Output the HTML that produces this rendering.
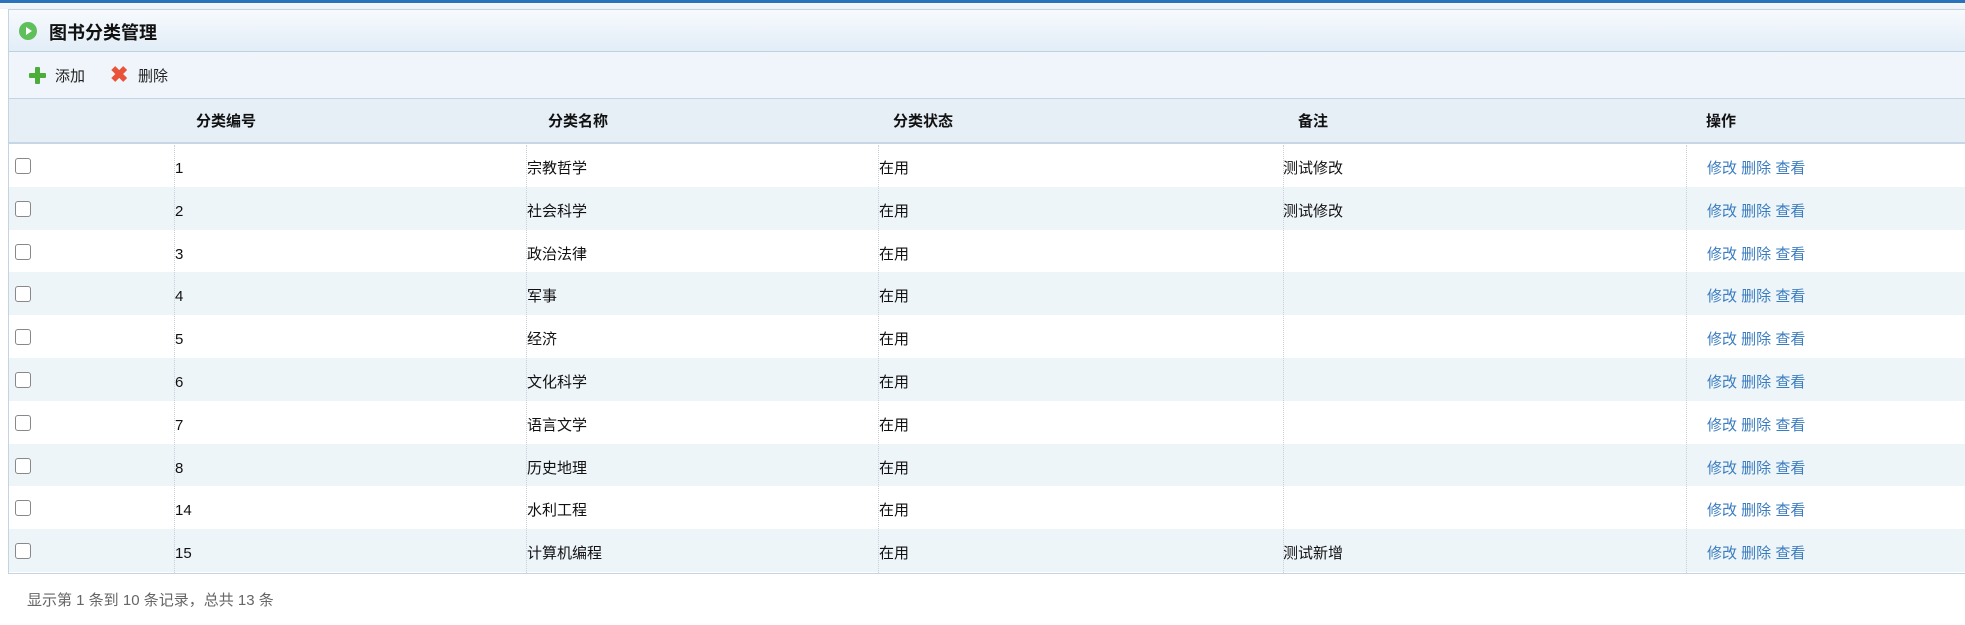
<!DOCTYPE html>
<html><head><meta charset="utf-8"><style>
*{margin:0;padding:0;box-sizing:border-box}
body{width:1965px;height:625px;background:#fff;font-family:"Liberation Sans","Noto Sans CJK SC",sans-serif;position:relative;overflow:hidden}
.top{position:absolute;left:0;top:0;width:1965px;height:3px;background:#2a72ba}
.strip{position:absolute;left:0;top:3px;width:1965px;height:6px;background:linear-gradient(#f6f8fa,#eef2f6)}
.panel{position:absolute;left:8px;top:9px;width:1957px;height:565px;border-left:1px solid #c4d4e2;border-top:1px solid #c4d4e2;border-bottom:1px solid #c4d4e2}
.title{height:42px;background:linear-gradient(#f7fafd,#e2edf7);border-bottom:1px solid #bcd0e2;position:relative}
.title .ic{position:absolute;left:10px;top:12px;width:18px;height:18px;border-radius:50%;background:#5fbf5a}
.title .ic:after{content:"";position:absolute;left:7px;top:5px;border-left:6px solid #fff;border-top:4px solid transparent;border-bottom:4px solid transparent}
.title span{position:absolute;left:40px;top:9px;font-size:18px;font-weight:bold;color:#111}
.tool{height:47px;background:#eff5fa;border-bottom:1px solid #c4d4e2;position:relative;font-size:15px;color:#222}
.tool .a{position:absolute;left:46px;top:13px}
.tool .d{position:absolute;left:129px;top:13px}
.plus{position:absolute;left:20px;top:15px;width:17px;height:17px}
.plus:before{content:"";position:absolute;left:6px;top:0;width:5px;height:17px;background:#4cad3a;border-radius:1px}
.plus:after{content:"";position:absolute;left:0;top:6px;width:17px;height:5px;background:#4cad3a;border-radius:1px}
.x{position:absolute;left:101px;top:12px;font-size:22px;color:#e8533a;font-weight:bold;line-height:22px}
.hdr{height:45px;background:#e6eef6;border-bottom:2px solid #c6d6e4;position:relative;font-size:15px;font-weight:bold;color:#111}
.hdr span{position:absolute;top:0;line-height:45px}
.row{height:42.8px;position:relative;font-size:15px;color:#111}
.row:nth-child(even){background:#eef5f9}
.row span{position:absolute;top:3px;line-height:43px}
.row .cb{position:absolute;left:6px;top:14px;width:16px;height:16px;border:1.5px solid #888;border-radius:3px;background:#fff}
.vl{position:absolute;top:145px;height:428px;border-left:1px dotted #c8d0d8}
.ops{color:#3a7cc0;left:1698px}
.foot{position:absolute;left:27px;top:589px;font-size:15px;color:#666}
</style></head><body>
<div class="top"></div><div class="strip"></div>
<div class="panel">
<div class="title"><div class="ic"></div><span>图书分类管理</span></div>
<div class="tool"><div class="plus"></div><span class="a">添加</span><span class="x">✖</span><span class="d">删除</span></div>
<div class="hdr"><span style="left:187px">分类编号</span><span style="left:539px">分类名称</span><span style="left:884px">分类状态</span><span style="left:1289px">备注</span><span style="left:1697px">操作</span></div>
<div>
<div class="row"><div class="cb"></div><span style="left:166px">1</span><span style="left:518px">宗教哲学</span><span style="left:870px">在用</span><span style="left:1274px">测试修改</span><span class="ops">修改 删除 查看</span></div>
<div class="row"><div class="cb"></div><span style="left:166px">2</span><span style="left:518px">社会科学</span><span style="left:870px">在用</span><span style="left:1274px">测试修改</span><span class="ops">修改 删除 查看</span></div>
<div class="row"><div class="cb"></div><span style="left:166px">3</span><span style="left:518px">政治法律</span><span style="left:870px">在用</span><span class="ops">修改 删除 查看</span></div>
<div class="row"><div class="cb"></div><span style="left:166px">4</span><span style="left:518px">军事</span><span style="left:870px">在用</span><span class="ops">修改 删除 查看</span></div>
<div class="row"><div class="cb"></div><span style="left:166px">5</span><span style="left:518px">经济</span><span style="left:870px">在用</span><span class="ops">修改 删除 查看</span></div>
<div class="row"><div class="cb"></div><span style="left:166px">6</span><span style="left:518px">文化科学</span><span style="left:870px">在用</span><span class="ops">修改 删除 查看</span></div>
<div class="row"><div class="cb"></div><span style="left:166px">7</span><span style="left:518px">语言文学</span><span style="left:870px">在用</span><span class="ops">修改 删除 查看</span></div>
<div class="row"><div class="cb"></div><span style="left:166px">8</span><span style="left:518px">历史地理</span><span style="left:870px">在用</span><span class="ops">修改 删除 查看</span></div>
<div class="row"><div class="cb"></div><span style="left:166px">14</span><span style="left:518px">水利工程</span><span style="left:870px">在用</span><span class="ops">修改 删除 查看</span></div>
<div class="row"><div class="cb"></div><span style="left:166px">15</span><span style="left:518px">计算机编程</span><span style="left:870px">在用</span><span style="left:1274px">测试新增</span><span class="ops">修改 删除 查看</span></div>
</div></div>
<div class="vl" style="left:174px"></div><div class="vl" style="left:526px"></div><div class="vl" style="left:878px"></div><div class="vl" style="left:1283px"></div><div class="vl" style="left:1686px"></div>
<div class="foot">显示第 1 条到 10 条记录，总共 13 条</div>
</body></html>
